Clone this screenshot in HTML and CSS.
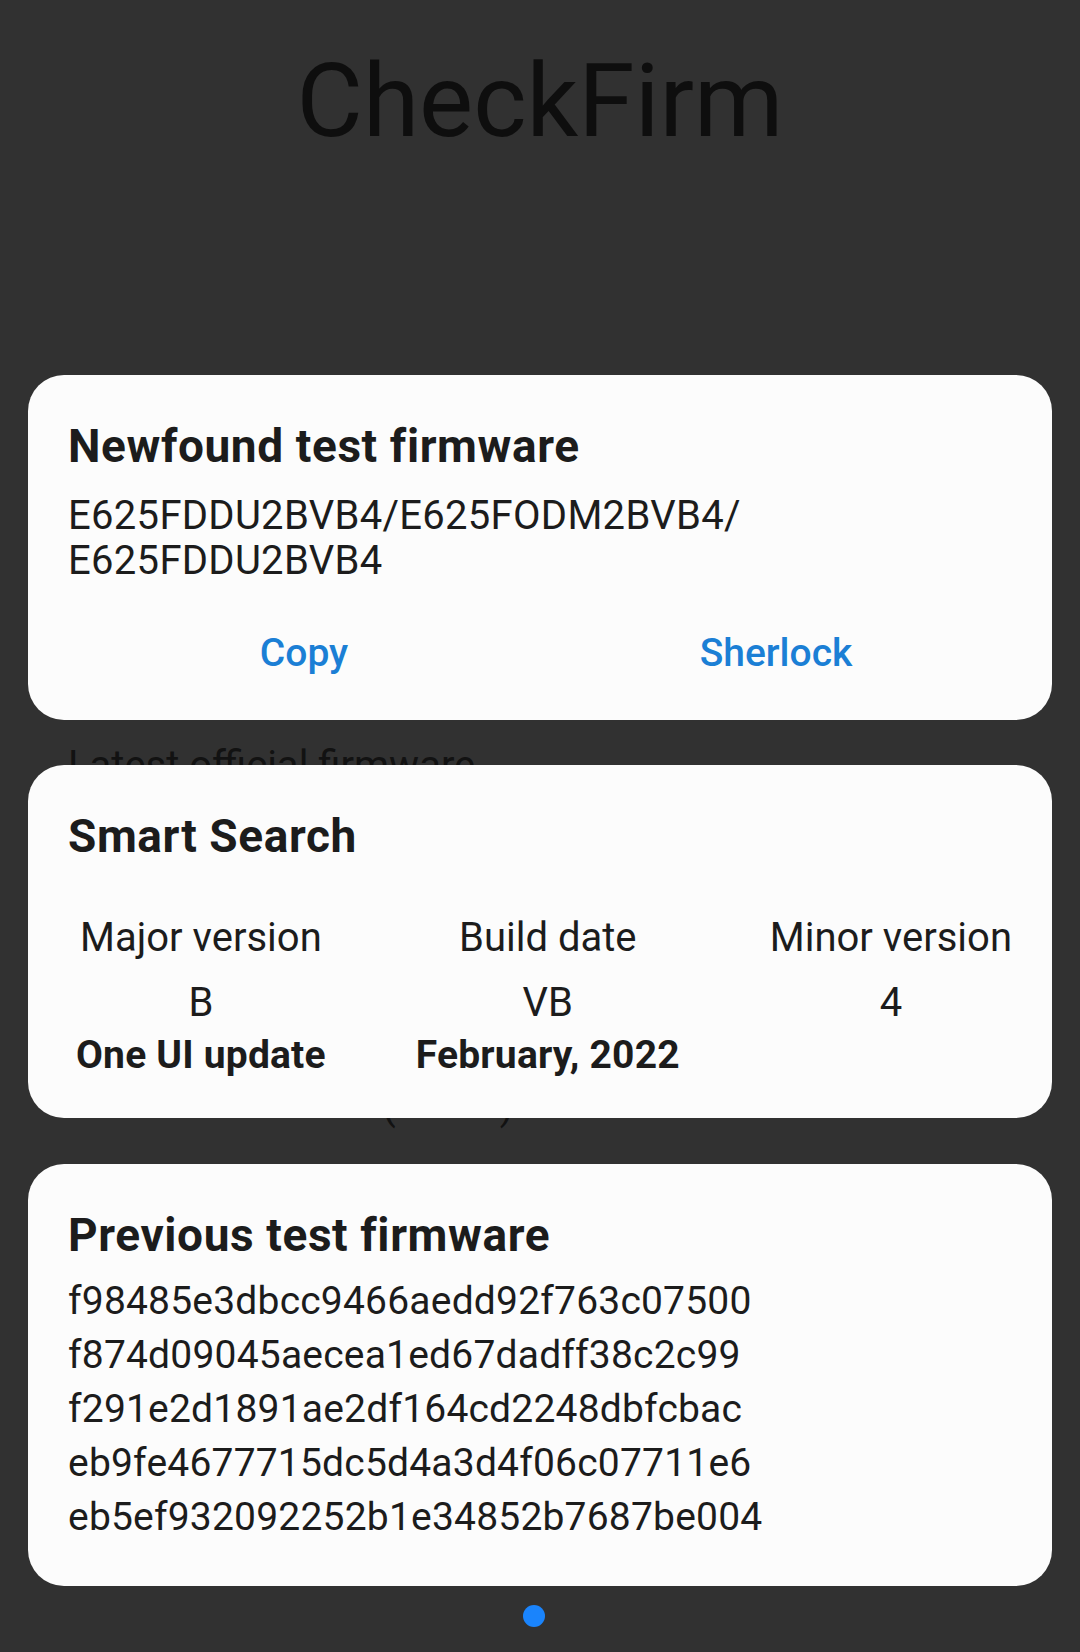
FILE: index.html
```html
<!DOCTYPE html>
<html lang="en">
<head>
    <meta charset="UTF-8">
    <meta name="viewport" content="width=device-width, initial-scale=1.0">
    <title>CheckFirm</title>
    <link rel="stylesheet" href="styles.css">
</head>
<body>
    <h1 class="app-title">CheckFirm</h1>

    <div class="card card-newfound">
        <h2 class="card-title">Newfound test firmware</h2>
        <p class="firmware">E625FDDU2BVB4/E625FODM2BVB4/<br>E625FDDU2BVB4</p>
        <div class="actions">
            <button class="action">Copy</button>
            <button class="action">Sherlock</button>
        </div>
    </div>

    <div class="behind behind-label">
        <p>Latest official firmware</p>
    </div>

    <div class="card card-smart">
        <h2 class="card-title">Smart Search</h2>
        <div class="smart-grid">
            <div class="smart-col">
                <span class="smart-label">Major version</span>
                <span class="smart-value">B</span>
                <span class="smart-meaning">One UI update</span>
            </div>
            <div class="smart-col">
                <span class="smart-label">Build date</span>
                <span class="smart-value">VB</span>
                <span class="smart-meaning">February, 2022</span>
            </div>
            <div class="smart-col">
                <span class="smart-label">Minor version</span>
                <span class="smart-value">4</span>
                <span class="smart-meaning">&nbsp;</span>
            </div>
        </div>
    </div>

    <div class="behind behind-parens">
        <p><span>(</span><span>)</span></p>
    </div>

    <div class="card card-previous">
        <h2 class="card-title">Previous test firmware</h2>
        <ul class="hashes">
            <li>f98485e3dbcc9466aedd92f763c07500</li>
            <li>f874d09045aecea1ed67dadff38c2c99</li>
            <li>f291e2d1891ae2df164cd2248dbfcbac</li>
            <li>eb9fe4677715dc5d4a3d4f06c07711e6</li>
            <li>eb5ef932092252b1e34852b7687be004</li>
        </ul>
    </div>

    <div class="pager">
        <span class="dot"></span>
    </div>
</body>
</html>
```

FILE: styles.css
```css
body {
    margin: 0;
    padding: 0 28px;
    background: #313131;
    font-family: Roboto, "Noto Sans", Arial, sans-serif;
    color: #1c1c1c;
    height: 1652px;
    overflow: hidden;
}

.app-title {
    margin: 41px 0 0;
    font-size: 102px;
    font-weight: 400;
    line-height: 121px;
    text-align: center;
    color: #0e0e0e;
}

.card {
    position: relative;
    z-index: 1;
    background: #fcfcfc;
    border-radius: 36px;
    padding: 44px 40px 0;
}

.card-newfound {
    margin-top: 213px;
    height: 301px;
}

.card-smart {
    height: 309px;
}

.card-previous {
    height: 378px;
}

.card-title {
    margin: 0;
    font-size: 46px;
    font-weight: 700;
    line-height: 54px;
    letter-spacing: 0.6px;
    color: #1c1c1c;
}

.firmware {
    margin: 20px 0 0;
    font-size: 40px;
    line-height: 45px;
    letter-spacing: 0.3px;
}

.actions {
    display: flex;
    margin-top: 47px;
}

.action {
    flex: 1;
    padding: 0;
    border: none;
    background: none;
    font-family: inherit;
    font-size: 39px;
    font-weight: 500;
    line-height: 47px;
    color: #1b7fd5;
    cursor: pointer;
}

.behind {
    overflow: hidden;
    color: #121212;
    font-size: 40px;
}

.behind p {
    margin: 0;
    line-height: 47px;
}

.behind-label {
    height: 45px;
    padding-left: 40px;
}

.behind-label p {
    margin-top: 22px;
}

.behind-parens {
    height: 46px;
}

.behind-parens p {
    margin-top: -36px;
    padding-left: 354px;
    display: flex;
    gap: 104px;
}

.smart-grid {
    display: flex;
    justify-content: space-between;
    margin-top: 51px;
    padding-left: 8px;
}

.smart-col {
    display: flex;
    flex-direction: column;
    align-items: center;
}

.smart-label {
    font-size: 40px;
    line-height: 47px;
}

.smart-value {
    margin-top: 18px;
    font-size: 40px;
    line-height: 47px;
}

.smart-meaning {
    margin-top: 6px;
    font-size: 39px;
    font-weight: 700;
    line-height: 47px;
    letter-spacing: 0.2px;
}

.hashes {
    list-style: none;
    margin: 12px 0 0;
    padding: 0;
}

.hashes li {
    font-size: 39px;
    line-height: 54px;
    letter-spacing: 0.2px;
}

.pager {
    display: flex;
    justify-content: center;
    padding-top: 19px;
    padding-right: 12px;
}

.dot {
    width: 22px;
    height: 22px;
    border-radius: 50%;
    background: #1a84fc;
}
```
